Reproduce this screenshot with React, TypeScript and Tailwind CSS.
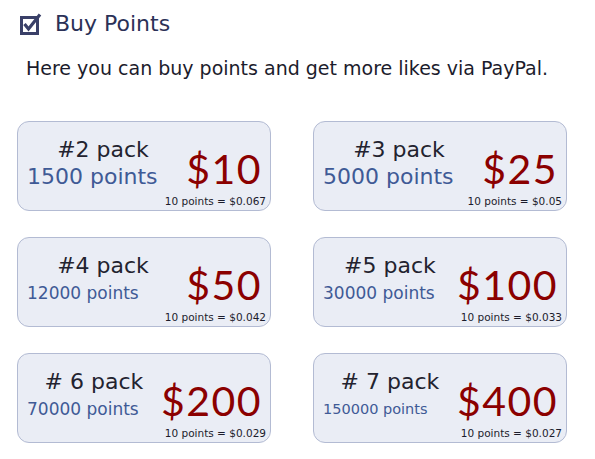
// Buy Points — pack price cards
const packs = [
  { name: '#2 pack', points: '1500 points', price: '$10', rate: '10 points = $0.067', pts: 'text-[22px]' },
  { name: '#3 pack', points: '5000 points', price: '$25', rate: '10 points = $0.05', pts: 'text-[22px]' },
  { name: '#4 pack', points: '12000 points', price: '$50', rate: '10 points = $0.042', pts: 'text-[17px]' },
  { name: '#5 pack', points: '30000 points', price: '$100', rate: '10 points = $0.033', pts: 'text-[17px]' },
  { name: '# 6 pack', points: '70000 points', price: '$200', rate: '10 points = $0.029', pts: 'text-[17px]' },
  { name: '# 7 pack', points: '150000 points', price: '$400', rate: '10 points = $0.027', pts: 'text-[14.5px]' },
];

export default function App() {
  return (
    <div className="min-h-screen bg-white px-[17px] pt-[9px] font-['DejaVu_Sans',sans-serif]">
      {/* --- Header --- */}
      <div className="flex items-center gap-[13px] pl-[3px]">
        <CheckIcon />
        <h1 className="text-[22px] leading-[30px] text-[#2b3157]">Buy Points</h1>
      </div>
      <p className="mt-[17px] pl-[9px] text-[19px] leading-[25px] text-[#1c1c2c]">
        Here you can buy points and get more likes via PayPal.
      </p>

      {/* --- Packs --- */}
      <div className="mt-[40px] grid w-[550px] grid-cols-2 gap-x-[42px] gap-y-[26px]">
        {packs.map((p) => (
          <PackCard key={p.name} {...p} />
        ))}
      </div>
    </div>
  );
}

function PackCard({
  name,
  points,
  price,
  rate,
  pts,
}: {
  name: string;
  points: string;
  price: string;
  rate: string;
  pts: string;
}) {
  return (
    <div className="flex h-[90px] flex-col rounded-[12px] border border-[#b3bbd3] bg-[#eaedf5] pl-[9px] pr-[4px] pt-[14px]">
      <div className="flex items-center justify-between">
        <div className="flex w-[152px] flex-col">
          <span className="whitespace-nowrap text-center text-[22px] leading-[26px] text-[#23232f]">{name}</span>
          <span className={'whitespace-nowrap leading-[28px] text-[#3f5a96] ' + pts}>{points}</span>
        </div>
        <span className="mt-[10px] pr-[4px] font-['Lato',sans-serif] text-[41px] leading-[46px] tracking-[1.5px] text-[#8b0000]">
          {price}
        </span>
      </div>
      <div className="mt-auto pb-[2px] text-right text-[10.5px] leading-[14px] text-[#1c1c2c]">{rate}</div>
    </div>
  );
}

function CheckIcon() {
  return (
    <svg width="22" height="22" viewBox="0 0 22 22">
      <rect x="1.5" y="4.5" width="16" height="16" fill="none" stroke="#3a4068" strokeWidth="3" />
      <path d="M4.5 11 L8.5 16 L20 1.5" fill="none" stroke="#3a4068" strokeWidth="3.2" strokeLinejoin="miter" />
    </svg>
  );
}
